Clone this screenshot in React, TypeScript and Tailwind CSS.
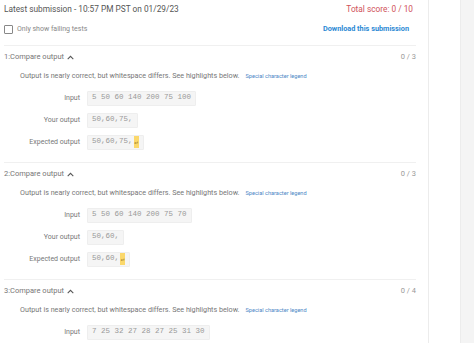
import React from 'react'

type Test = {
  num: number
  score: string
  input: string
  yours: string
  expected: string
}

const tests: Test[] = [
  { num: 1, score: '0 / 3', input: '5 50 60 140 200 75 100', yours: '50,60,75,', expected: '50,60,75,' },
  { num: 2, score: '0 / 3', input: '5 50 60 140 200 75 70', yours: '50,60,', expected: '50,60,' },
  { num: 3, score: '0 / 4', input: '7 25 32 27 28 27 25 31 30', yours: '25,27,', expected: '25,27,' },
]

const mono = { fontFamily: '"Liberation Mono", "DejaVu Sans Mono", monospace' }

const Caret = () => (
  <svg width="7" height="5" viewBox="0 0 10 6" className="ml-[3px] mt-[1px]">
    <path d="M1 5.2 L5 1.3 L9 5.2" fill="none" stroke="#555" strokeWidth="1.5" />
  </svg>
)

const Row = ({ label, children }: { label: string; children: React.ReactNode }) => (
  <div className="flex h-[22px] items-center">
    <div className="w-[76px] text-right text-[7px] text-[#777]">{label}</div>
    <div className="ml-[7px]">{children}</div>
  </div>
)

const Box = ({ children }: { children: React.ReactNode }) => (
  <div
    className="flex h-[15px] items-center rounded-[1px] border border-[#eeeeee] bg-[#f5f5f5] px-[4px] text-[7.5px] text-[#999]"
    style={mono}
  >
    {children}
  </div>
)

const Section = ({ t }: { t: Test }) => (
  <div className="border-t border-[#f0f0f0]">
    <div className="flex h-[20px] items-center justify-between pt-[1px] text-[7.5px] text-[#777]">
      <div className="flex items-center">
        {t.num}:Compare output
        <Caret />
      </div>
      <div className="text-[#999]">{t.score}</div>
    </div>
    <div className="flex h-[20px] items-center pl-[16px] pt-[1px] text-[7.2px] text-[#777]">
      Output is nearly correct, but whitespace differs. See highlights below.
      <span className="ml-[6px] text-[5.6px] text-[#4a86c5]">Special character legend</span>
    </div>
    <div className="pt-[1px]">
      <Row label="Input">
        <Box>{t.input}</Box>
      </Row>
      <Row label="Your output">
        <Box>{t.yours}</Box>
      </Row>
      <Row label="Expected output">
        <Box>
          {t.expected}
          <span className="ml-[1px] flex h-[12px] w-[5px] items-center justify-center bg-[#fbd86b] text-[6px] text-[#8a6d1f]">
            ↵
          </span>
        </Box>
      </Row>
    </div>
    <div className="h-[9px]" />
  </div>
)

export default function App() {
  return (
    <div
      className="flex h-[343px] w-[474px] overflow-hidden bg-white"
      style={{ fontFamily: 'Roboto, "Noto Sans", Arial, sans-serif' }}
    >
      <div className="w-[429px] shrink-0 border-r border-[#ececec] pl-[4px] pr-[12px]">
        <div className="flex h-[17px] items-center justify-between pr-[3px] pt-[1px] text-[8.3px]">
          <div className="text-[#555]">Latest submission - 10:57 PM PST on 01/29/23</div>
          <div className="text-[#d0525a]">Total score: 0 / 10</div>
        </div>
        <div className="flex h-[24px] items-center justify-between">
          <div className="flex items-center">
            <div className="h-[9px] w-[9px] rounded-[1px] border border-[#888]" />
            <span className="ml-[4px] text-[7px] text-[#888]">Only show failing tests</span>
          </div>
          <div className="mr-[7px] text-[7.3px] font-bold text-[#2a88d4]">Download this submission</div>
        </div>
        <div className="h-[4px]" />
        {tests.map((t) => (
          <Section key={t.num} t={t} />
        ))}
      </div>
      <div className="w-[31px] shrink-0" />
      <div className="flex-1 border-l border-[#ececec] bg-[#f4f4f4]" />
    </div>
  )
}
